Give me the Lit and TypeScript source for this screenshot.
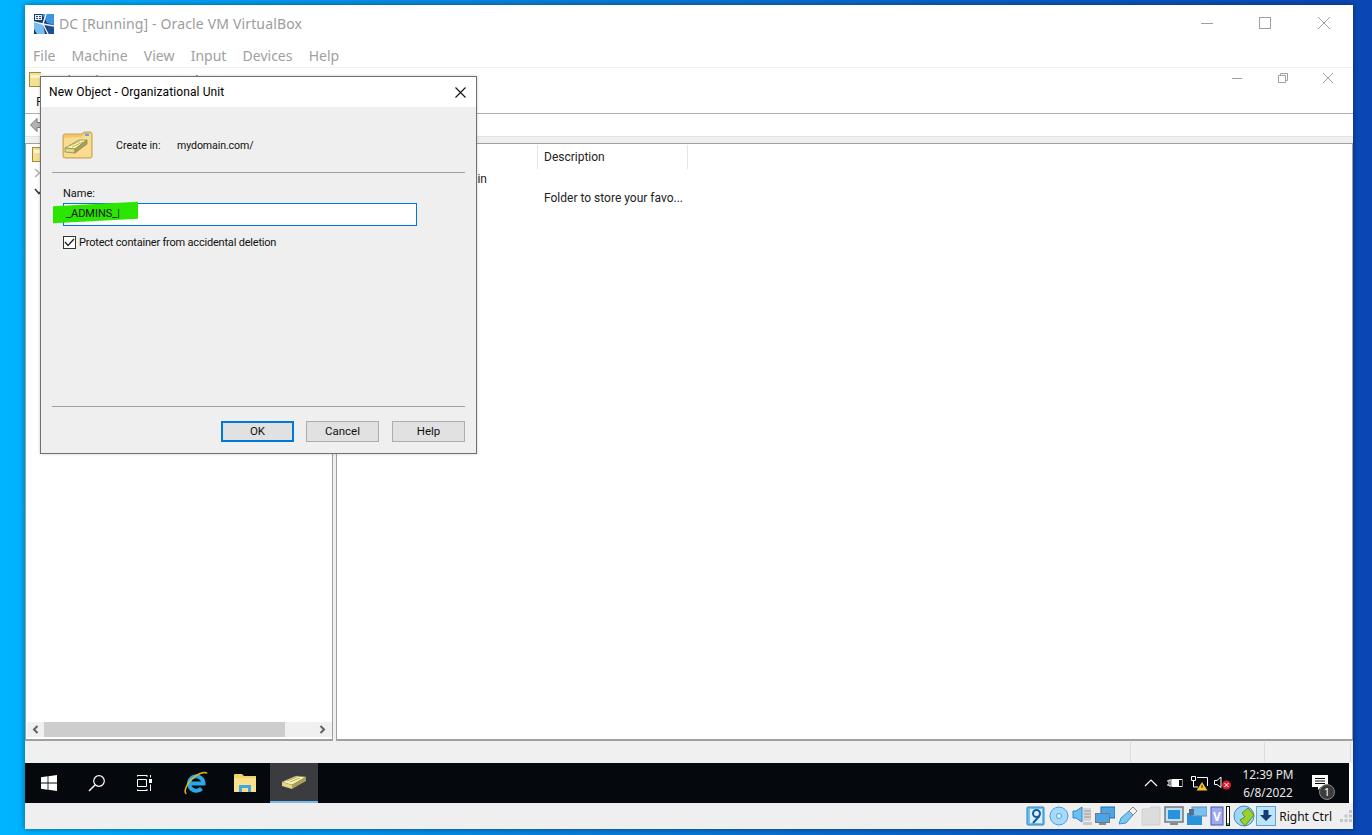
import { LitElement, html, css, svg } from 'lit';
import { customElement } from 'lit/decorators.js';

const folderIcon = svg`
  <path d="M1 5 Q1 3 3 3 H20 L22 1 H28 Q30 1 30 3 V25 Q30 27 28 27 H3 Q1 27 1 25 Z" fill="#f0c869" stroke="#c9a24f" stroke-width="1"/>
  <path d="M2 7 L20 6 L23 3 H29 V25 Q29 26 28 26 H3 Q2 26 2 25 Z" fill="#f8dc94"/>
  <rect x="23" y="2.500" width="4" height="2.500" fill="#6f9fe0"/>
  <path d="M3 17 L17 9 L25 9 L13 18 Z" fill="#fbf3b0" stroke="#8f8a45" stroke-width=".8"/>
  <path d="M3 17 L13 18 V22 L3 21 Z" fill="#e3d98d" stroke="#8f8a45" stroke-width=".8"/>
  <path d="M13 18 L25 9 V13 L13 22 Z" fill="#a9a050" stroke="#8f8a45" stroke-width=".8"/>
  <path d="M7 15 L18 10 M10 16 L21 11" stroke="#a8a25a" stroke-width=".8"/>`;

const smallFolder = svg`
  <svg width="12" height="15" viewBox="0 0 12 15"><rect x=".5" y=".5" width="15" height="14" fill="#f5e08f" stroke="#a58a3c"/><rect x="2" y="3" width="12" height="3" fill="#fdf6d0"/></svg>`;

const menuItems = ['File', 'Machine', 'View', 'Input', 'Devices', 'Help'];

@customElement('app-root')
export class AppRoot extends LitElement {
  static styles = css`
    :host {
      display: block;
      position: relative;
      width: 1372px;
      height: 835px;
      overflow: hidden;
      font-family: "Noto Sans", "Open Sans", sans-serif;
      background: linear-gradient(90deg, #00b4ff 0%, #00a8fa 10%, #0a80dc 40%, #0a5cc4 75%, #0a47b5 100%);
    }
    svg { display: block; flex: none; }

    .window {
      position: absolute;
      left: 25px;
      top: 5px;
      width: 1328px;
      height: 824px;
      background: #fff;
      display: flex;
      flex-direction: column;
      box-shadow: 0 0 6px rgba(0, 0, 0, .45);
    }
    .titlebar {
      height: 39px;
      flex: none;
      display: flex;
      align-items: center;
      padding-left: 9px;
      padding-bottom: 2px;
      box-sizing: border-box;
      color: #9c9c9c;
      font-size: 14px;
      letter-spacing: .15px;
    }
    .titlebar .logo { margin-right: 5px; }
    .controls { margin-left: auto; display: flex; }
    .controls.top { margin-top: -2px; }
    .controls.top div { width: 58.5px; display: flex; justify-content: center; }
    .controls.guest { padding-right: 2px; align-self: flex-start; margin-top: 1px; }
    .controls.guest div { width: 45.5px; display: flex; justify-content: center; }

    .menubar {
      height: 23px;
      flex: none;
      display: flex;
      gap: 16.2px;
      padding-left: 8px;
      color: #a0a0a0;
      font-size: 14px;
      line-height: 23px;
      border-bottom: 1px solid #f0f0f0;
    }

    .guest-title {
      height: 27px;
      flex: none;
      display: flex;
      align-items: flex-start;
      padding: 4px 0 0 4px;
      box-sizing: border-box;
      font-size: 12px;
      line-height: 16px;
      color: #555;
    }
    .guest-title span { margin: 1px 0 0 9px; }
    .guest-menu {
      height: 19px;
      flex: none;
      box-sizing: border-box;
      border-bottom: 1px solid #b0adb8;
      padding-left: 11px;
      font-size: 12px;
      line-height: 14px;
      color: #111;
    }
    .toolbar {
      height: 22px;
      flex: none;
      padding-left: 5px;
      display: flex;
      align-items: center;
    }
    .strip {
      height: 7px;
      flex: none;
      background: #efefef;
      border-top: 1px solid #e4e4e4;
      box-sizing: border-box;
    }
    .panes {
      flex: 1;
      display: flex;
      gap: 3px;
      min-height: 0;
      background: #f0f0f0;
    }
    .pane {
      background: #fff;
      border: 2px solid #a0a0a0;
      border-width: 1px 1px 2px 1px;
      box-sizing: border-box;
      position: relative;
    }
    .tree {
      width: 308px;
      display: flex;
      flex-direction: column;
    }
    .tree-rows {
      flex: 1;
      padding: 3px 0 0 6px;
      display: flex;
      flex-direction: column;
    }
    .tree-rows svg.chev { margin: 6px 0 0 2px; }
    .tree-rows svg.chev + svg.chev { margin-top: 10px; }
    .scrollbar {
      height: 15px;
      margin: 0 0 2px 1px;
      width: 305px;
      background: #f0f0f0;
      display: flex;
      align-items: center;
      justify-content: space-between;
      padding: 0 6px 0 5px;
      box-sizing: border-box;
      position: relative;
    }
    .thumb {
      position: absolute;
      left: 17px;
      top: 0;
      width: 241px;
      height: 15px;
      background: #cdcdcd;
    }
    .list { flex: 1; font-family: Roboto, "Noto Sans", sans-serif; font-size: 12px; color: #222; }
    .list-head { display: flex; height: 26px; }
    .list-head div {
      box-sizing: border-box;
      height: 24px;
      margin-top: 1px;
      line-height: 24px;
      border-right: 1px solid #e5e5e5;
      padding-left: 6px;
    }
    .col-name { width: 201px; }
    .col-desc { width: 150px; }
    .list-row { display: flex; height: 19px; line-height: 19px; }
    .list-row .name { width: 150px; text-align: right; flex: none; }
    .list-row .name.short { text-align: left; padding-left: 25px; box-sizing: border-box; }
    .list-row .desc { margin-left: 57px; }

    .statusbar {
      height: 22px;
      flex: none;
      background: #f0f0f0;
      display: flex;
      justify-content: flex-end;
    }
    .statusbar div {
      border-left: 1px solid #dcdcdc;
      margin: 1px 0;
    }
    .statusbar .a { width: 133px; }
    .statusbar .b { width: 85px; }
    .statusbar .c { width: 2px; }

    .taskbar {
      height: 40px;
      flex: none;
      margin-right: 4px;
      background: #05090d;
      display: flex;
      align-items: center;
      color: #fff;
    }
    .task {
      width: 48px;
      height: 40px;
      display: flex;
      align-items: center;
      justify-content: center;
      box-sizing: border-box;
    }
    .task.ie { margin-left: 3px; }
    .task.files { margin-left: 1px; }
    .task.active {
      margin-left: 1px;
      background: #3a3c40;
      border-bottom: 2px solid #76b9ed;
    }
    .tray { margin-left: auto; display: flex; align-items: center; height: 40px; }
    .tray-icon { width: 24px; display: flex; justify-content: center; }
    .clock {
      width: 64px;
      margin-left: 1px;
      text-align: center;
      font-size: 11.8px;
      line-height: 18px;
      color: #e8e8e8;
    }
    .notify { width: 40px; margin-right: 9px; position: relative; display: flex; justify-content: center; }
    .badge {
      position: absolute;
      left: 19px;
      top: 9px;
      width: 16px;
      height: 16px;
      border-radius: 50%;
      background: #3c3c3c;
      border: 1px solid #888;
      box-sizing: border-box;
      font-size: 11px;
      line-height: 14px;
      text-align: center;
    }

    .vbox-status {
      height: 26px;
      flex: none;
      background: #efefef;
      display: flex;
      align-items: center;
      justify-content: flex-end;
      padding-right: 1px;
      gap: 3px;
      font-size: 12px;
      color: #111;
    }
    .vbox-status .line { margin-left: -1px; }
    .vbox-status .down { margin-left: -2px; }
    .vbox-status .host { margin-right: 5px; }

    .dialog {
      position: absolute;
      left: 40px;
      top: 76px;
      width: 437px;
      height: 378px;
      box-sizing: border-box;
      border: 1px solid #707070;
      background: #efefef;
      display: flex;
      flex-direction: column;
      font-family: Roboto, "Noto Sans", sans-serif;
      font-size: 12px;
      color: #111;
      box-shadow: 0 0 3px rgba(0, 0, 0, .2);
    }
    .dlg-title {
      height: 30px;
      flex: none;
      background: #fff;
      display: flex;
      align-items: center;
      justify-content: space-between;
      padding: 0 10px 0 8px;
      box-sizing: border-box;
      color: #000;
      letter-spacing: .1px;
    }
    .dlg-body {
      flex: 1;
      padding: 0 11px;
      display: flex;
      flex-direction: column;
    }
    .create {
      height: 66px;
      flex: none;
      box-sizing: border-box;
      border-bottom: 1px solid #a0a0a0;
      display: flex;
      align-items: center;
      padding: 11px 0 0 10px;
      font-size: 10.6px;
    }
    .create .lbl { margin-left: 22px; width: 61px; }
    .create .where { letter-spacing: -.1px; }
    .field { padding: 13px 0 0 11px; flex: 1; }
    .field label { display: block; height: 17px; line-height: 15px; font-size: 11px; }
    .input {
      position: relative;
      box-sizing: border-box;
      width: 354px;
      height: 23px;
      border: 1px solid #0078d7;
      background: #fff;
      line-height: 20px;
      padding-left: 2px;
      font-size: 11px;
    }
    .highlight {
      position: absolute;
      left: -11px;
      top: 0;
      width: 85px;
      height: 17px;
      background: #2ae600;
      transform: skewY(-2.9deg);
    }
    .input span { position: relative; }
    .check {
      display: flex;
      align-items: center;
      gap: 3px;
      margin-top: 10px;
      font-size: 11px;
      letter-spacing: -.2px;
    }
    .box {
      width: 13px;
      height: 13px;
      box-sizing: border-box;
      border: 1px solid #333;
      background: #fff;
      display: flex;
      align-items: center;
      justify-content: center;
    }
    .buttons {
      height: 47px;
      flex: none;
      box-sizing: border-box;
      border-top: 1px solid #a0a0a0;
      display: flex;
      justify-content: flex-end;
      gap: 13px;
      padding-top: 14px;
    }
    .btn {
      width: 73px;
      height: 21px;
      box-sizing: border-box;
      border: 1px solid #adadad;
      background: #e1e1e1;
      text-align: center;
      line-height: 19px;
      font-size: 11.5px;
    }
    .btn.primary { border: 2px solid #0078d7; line-height: 17px; margin-right: -1px; }
  `;

  render() {
    return html`
      <div class="window">
        <div class="titlebar">
          <svg class="logo" width="20" height="20" viewBox="0 0 20 20">
            <rect width="20" height="20" fill="#17396f"/>
            <path d="M8 0H20V11L13 9Z" fill="#3f94e2"/>
            <path d="M0 9L9 10L11 20H3L0 15Z" fill="#74bff0"/>
            <path d="M13 11L20 13V20H14Z" fill="#1f4d8f"/>
            <path d="M12 0L9 10L14 20M0 8L9 10L20 12" stroke="#e9f3fb" stroke-width="1.4" fill="none"/>
            <rect x="1" y="1" width="7" height="5" fill="#e8eef6"/>
            <path d="M2 2.500H4M2 4.500H4M5 2.500H7M5 4.500H7" stroke="#444"/>
          </svg>
          DC [Running] - Oracle VM VirtualBox
          <div class="controls top">
            <div><svg width="12" height="12"><path d="M0 6.5H12" stroke="#a0a0a0"/></svg></div>
            <div><svg width="12" height="12"><rect x=".5" y=".5" width="11" height="11" fill="none" stroke="#a0a0a0"/></svg></div>
            <div><svg width="12" height="12"><path d="M0 0L12 12M12 0L0 12" stroke="#a0a0a0"/></svg></div>
          </div>
        </div>
        <div class="menubar">${menuItems.map((m) => html`<span>${m}</span>`)}</div>

        <div class="guest-title">
          ${smallFolder}
          <span>Active Directory Users and Computers</span>
          <div class="controls guest">
            <div><svg width="10" height="10"><path d="M0 5.5H10" stroke="#a0a0a0"/></svg></div>
            <div><svg width="10" height="10"><path d="M.5 2.5H7.5V9.5H.5ZM2.5 2.5V.5H9.5V7.5H7.5" fill="none" stroke="#a0a0a0"/></svg></div>
            <div><svg width="10" height="10"><path d="M0 0L10 10M10 0L0 10" stroke="#a0a0a0"/></svg></div>
          </div>
        </div>
        <div class="guest-menu">File</div>
        <div class="toolbar">
          <svg width="14" height="14" viewBox="0 0 14 14"><path d="M7 0.5 L0.5 7 L7 13.5 V9.5 H13 V4.5 H7 Z" fill="#b4b4b4" stroke="#777"/></svg>
        </div>
        <div class="strip"></div>

        <div class="panes">
          <div class="pane tree">
            <div class="tree-rows">
              ${smallFolder}
              <svg class="chev" width="7" height="10"><path d="M1 1L5.5 5L1 9" fill="none" stroke="#b0b0b0" stroke-width="1.5"/></svg>
              <svg class="chev" width="10" height="7"><path d="M1 1L5 5.5L9 1" fill="none" stroke="#333" stroke-width="1.5"/></svg>
            </div>
            <div class="scrollbar">
              <div class="thumb"></div>
              <svg width="7" height="9"><path d="M5.500 1L2 4.500L5.500 8" fill="none" stroke="#606060" stroke-width="2"/></svg>
              <svg width="7" height="9"><path d="M1.500 1L5 4.500L1.500 8" fill="none" stroke="#606060" stroke-width="2"/></svg>
            </div>
          </div>
          <div class="pane list">
            <div class="list-head">
              <div class="col-name">Name</div>
              <div class="col-desc">Description</div>
            </div>
            <div class="list-row"><span class="name">Domain</span></div>
            <div class="list-row"><span class="name short">Saved Queries</span><span class="desc">Folder to store your favo...</span></div>
          </div>
        </div>

        <div class="statusbar"><div class="a"></div><div class="b"></div><div class="c"></div></div>

        <div class="taskbar">
          <div class="task">
            <svg width="16" height="16" viewBox="0 0 16 16"><path d="M0 2.3L6.6 1.3V7.5H0ZM7.4 1.2L16 0V7.5H7.4ZM0 8.4H6.6V14.7L0 13.7ZM7.4 8.4H16V16L7.4 14.8Z" fill="#fff"/></svg>
          </div>
          <div class="task">
            <svg width="18" height="18" viewBox="0 0 18 18"><circle cx="11" cy="7" r="5.3" fill="none" stroke="#fff" stroke-width="1.2"/><path d="M7 11L1 17" stroke="#fff" stroke-width="1.4"/></svg>
          </div>
          <div class="task">
            <svg width="16" height="16" viewBox="0 0 16 16"><path d="M0 .5H10M0 15.5H10M0 0V2M10 0V2M0 14V16M10 14V16M.5 4.5H9.5V11.5H.5Z" fill="none" stroke="#fff"/><rect x="12" y="4" width="3" height="4" fill="#fff"/><path d="M13.5 0V2.5M13.5 9.5V16" stroke="#fff"/></svg>
          </div>
          <div class="task ie">
            <svg width="24" height="24" viewBox="0 0 24 24">
              <path d="M6.500 12.500H19.500A7.200 7.200 0 1 0 17.500 17.500" fill="none" stroke="#2aa8e8" stroke-width="4"/>
              <path d="M2.500 22.500Q0 22 2 16.500Q6 7 16 2.500Q22.500 .5 23 2.500" fill="none" stroke="#e8b41c" stroke-width="1.500"/>
            </svg>
          </div>
          <div class="task files">
            <svg width="22" height="20" viewBox="0 0 22 20">
              <path d="M0 2 Q0 1 1 1 H8 L10 3 H22 V19 H0 Z" fill="#f4d06b"/>
              <rect x="0" y="5" width="22" height="14" fill="#fbe08c"/>
              <path d="M5 19 V12 H17 V19 H14 V15 H8 V19 Z" fill="#3fa9e4"/>
            </svg>
          </div>
          <div class="task active">
            <svg width="24" height="16" viewBox="0 0 24 16">
              <path d="M0 8 L14 2 L24 3 L10 11 Z" fill="#f9f3b4" stroke="#8b8548" stroke-width=".6"/>
              <path d="M0 8 L10 11 V15 L0 12 Z" fill="#e1d68a"/>
              <path d="M10 11 L24 3 V7 L10 15 Z" fill="#a8a05a"/>
              <path d="M5 7 L15 3 M8 8 L18 4" stroke="#b3ac5f"/>
            </svg>
          </div>
          <div class="tray">
            <div class="tray-icon">
              <svg width="14" height="8"><path d="M1 7L7 1L13 7" fill="none" stroke="#fff" stroke-width="1.2"/></svg>
            </div>
            <div class="tray-icon">
              <svg width="16" height="12" viewBox="0 0 16 12"><path d="M0 4H2M0 8H2M2 3H4V9H2Z" fill="none" stroke="#fff"/><rect x="5" y="2.5" width="10" height="7" fill="#fff" stroke="#fff"/><rect x="12" y="3" width="3" height="6" fill="#05090d"/></svg>
            </div>
            <div class="tray-icon">
              <svg width="17" height="15" viewBox="0 0 17 15"><path d="M.5 .5H4.5V4.5H.5ZM6 1.5H16.5V10M2.5 4.5V11H7" fill="none" stroke="#fff"/><path d="M11 6L16.5 14.5H5.5Z" fill="#f7c22b"/><path d="M11 9V12" stroke="#222"/></svg>
            </div>
            <div class="tray-icon">
              <svg width="18" height="14" viewBox="0 0 18 14"><path d="M.5 4.5H3L7 1V11.5L3 8.5H.5Z" fill="none" stroke="#fff"/><circle cx="12.5" cy="9" r="4.5" fill="#d81e2c"/><path d="M10.5 7L14.5 11M14.5 7L10.5 11" stroke="#fff"/></svg>
            </div>
            <div class="clock">12:39 PM<br />6/8/2022</div>
            <div class="notify">
              <svg width="16" height="16" viewBox="0 0 16 16"><path d="M0 0H16V12H9L6 15V12H0Z" fill="#fff"/><path d="M3 3.5H13M3 6H13M3 8.5H13" stroke="#05090d"/></svg>
              <div class="badge">1</div>
            </div>
          </div>
        </div>

        <div class="vbox-status">
          <svg width="20" height="20" viewBox="0 0 20 20"><rect x="1" y="1" width="17" height="18" rx="1" fill="#6cc0f1" stroke="#2e7fc4"/><path d="M4 17H16V3H4Z" fill="#d9f0fc"/><circle cx="10.5" cy="7.5" r="3.5" fill="none" stroke="#1a5a9c" stroke-width="2"/><path d="M13.500 10L7 17" stroke="#1a5a9c" stroke-width="2"/></svg>
          <svg width="20" height="20" viewBox="0 0 20 20"><circle cx="10" cy="10" r="9" fill="#a5dbf8" stroke="#4a9fdd"/><circle cx="10" cy="10" r="2.5" fill="#e7f6fe" stroke="#4a9fdd"/></svg>
          <svg width="20" height="20" viewBox="0 0 20 20"><path d="M1 5H4L10 1V16L4 12H1Z" fill="#6cc0f1" stroke="#2e86c9"/><rect x="11" y="2" width="8" height="13" fill="#d4d4d4"/><path d="M12 5H19M12 8H19M12 11H19" stroke="#9c9c9c"/><rect x="11" y="16" width="9" height="3" fill="#c8c8c8"/></svg>
          <svg width="20" height="20" viewBox="0 0 20 20"><rect x="6" y="1" width="14" height="11" fill="#4aa4e6" stroke="#1f6db0"/><rect x="0.5" y="7.5" width="14" height="9" fill="#4aa4e6" stroke="#777"/><rect x="4" y="17" width="7" height="2" fill="#888"/></svg>
          <svg width="20" height="20" viewBox="0 0 20 20"><path d="M1 18 L3 12 L11 5 L15 9 L8 17 Z" fill="#7cc6f3" stroke="#3a8fcf"/><path d="M11 5L15 1L19 5L15 9Z" fill="#f2f2f2" stroke="#888"/></svg>
          <svg width="20" height="20" viewBox="0 0 20 20"><path d="M1 3H8L10 1H19V19H1Z" fill="#dcdcdc" stroke="#cfcfcf"/></svg>
          <svg width="20" height="20" viewBox="0 0 20 20"><rect x="1" y="1" width="18" height="15" fill="#bfe2f7" stroke="#777" stroke-width="1.5"/><rect x="4" y="4" width="12" height="9" fill="#2793dd"/><rect x="6" y="17" width="8" height="2" fill="#888"/></svg>
          <svg width="20" height="20" viewBox="0 0 20 20"><rect x="0" y="7" width="15" height="12" fill="#2793dd"/><rect x="5" y="1" width="15" height="9" fill="#7cc0ee" stroke="#5a8fbb"/><rect x="2" y="3" width="5" height="6" fill="#5a6f87"/></svg>
          <svg width="14" height="20" viewBox="0 0 14 20"><rect x="1" y="1" width="12" height="18" fill="#9fa9ec" stroke="#4857b8"/><text x="7" y="15" font-size="12" font-weight="700" text-anchor="middle" fill="#fff" font-family="Noto Sans">V</text></svg>
          <svg class="line" width="4" height="20" viewBox="0 0 4 20"><rect x=".5" y=".5" width="3" height="19" fill="#fff" stroke="#111"/><rect x="1" y="17" width="2" height="2" fill="#3fbf3f"/></svg>
          <svg width="22" height="22" viewBox="0 0 22 22"><circle cx="11" cy="11" r="10" fill="#9ed4f4" stroke="#3a8fcf"/><path d="M9 8L15 3L21 10L12 21L7 15L12 12Z" fill="#9ad12f" stroke="#5e8f16"/></svg>
          <svg class="down" width="20" height="20" viewBox="0 0 20 20"><rect x=".5" y=".5" width="19" height="19" fill="#bfe4fa" stroke="#5aa5de"/><path d="M7.5 4H12.5V9H16L10 15L4 9H7.5Z" fill="#123c78"/></svg>
          <span class="host">Right Ctrl</span>
          <svg width="12" height="12" viewBox="0 0 12 12"><path d="M9 0h3v3H9zM4.500 4.500h3v3h-3zM9 4.500h3v3H9zM0 9h3v3H0zM4.500 9h3v3h-3zM9 9h3v3H9z" fill="#c4c4c4"/></svg>
        </div>
      </div>

      <div class="dialog">
        <div class="dlg-title">
          <span>New Object - Organizational Unit</span>
          <svg width="11" height="11"><path d="M.5 .5L10.500 10.500M10.500 .5L.5 10.500" stroke="#111" stroke-width="1.1"/></svg>
        </div>
        <div class="dlg-body">
          <div class="create">
            <svg width="32" height="28" viewBox="0 0 32 28">${folderIcon}</svg>
            <span class="lbl">Create in:</span>
            <span class="where">mydomain.com/</span>
          </div>
          <div class="field">
            <label>Name:</label>
            <div class="input"><div class="highlight"></div><span>_ADMINS_|</span></div>
            <div class="check">
              <div class="box"><svg width="11" height="9"><path d="M1 4L4 7.500L10 1" fill="none" stroke="#222" stroke-width="1.300"/></svg></div>
              <span>Protect container from accidental deletion</span>
            </div>
          </div>
          <div class="buttons">
            <div class="btn primary">OK</div>
            <div class="btn">Cancel</div>
            <div class="btn">Help</div>
          </div>
        </div>
      </div>
    `;
  }
}
